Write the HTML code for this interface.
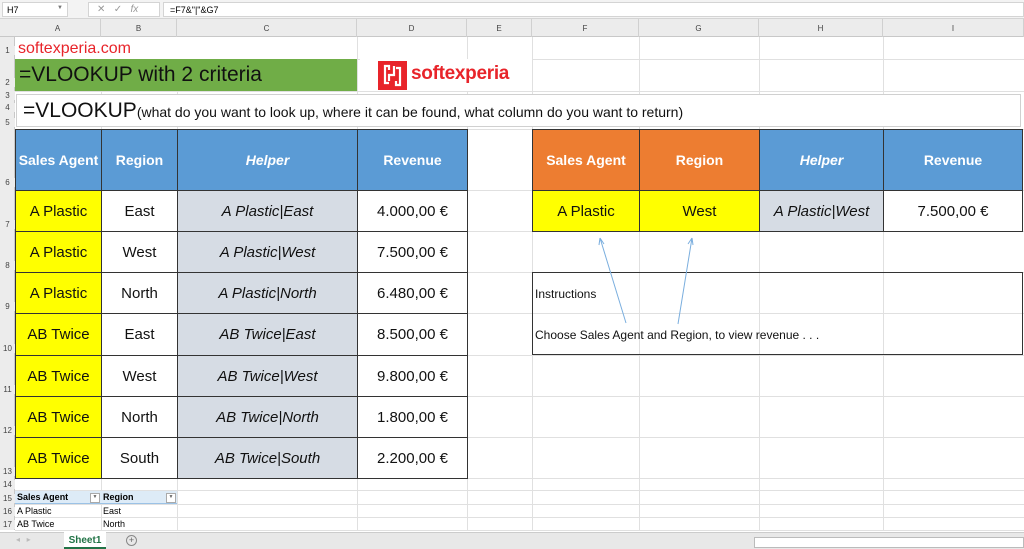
<!DOCTYPE html>
<html><head><meta charset="utf-8"><style>
*{margin:0;padding:0;box-sizing:border-box}
body{width:1024px;height:549px;overflow:hidden;background:#fff;font-family:"Liberation Sans",sans-serif;position:relative}
.a{position:absolute}
.c{position:absolute;display:flex;align-items:center;justify-content:center;font-size:15px;color:#111}
.vl{position:absolute;width:1px;background:#e0e0e0;top:37px;height:493px}
.hl{position:absolute;height:1px;background:#e0e0e0;left:15px;width:1009px}
.rn{position:absolute;left:0;width:15px;font-size:8px;color:#444;text-align:center;background:#ececec}
.ch{position:absolute;top:19px;height:18px;font-size:8px;color:#444;display:flex;align-items:center;justify-content:center;border-right:1px solid #d0d0d0}
.hd{background:#5b9bd5;color:#fff;font-weight:bold}
.y{background:#ffff00}
.g{background:#d6dce4;font-style:italic}
.t{border:1px solid #333}
</style></head><body>
<div class="a" style="left:0;top:0;width:1024px;height:19px;background:#f3f3f3;border-bottom:1px solid #d4d4d4"></div>
<div class="a" style="left:2px;top:2px;width:66px;height:15px;background:#fff;border:1px solid #d4d4d4;font-size:9px;padding:2px 4px">H7<span style="float:right;font-size:6px;color:#777">▼</span></div>
<div class="a" style="left:88px;top:2px;width:72px;height:15px;background:#fff;border:1px solid #d4d4d4;font-size:10px;color:#999;padding:1px 8px">✕ &nbsp; ✓ &nbsp; <i>fx</i></div>
<div class="a" style="left:163px;top:2px;width:861px;height:15px;background:#fff;border:1px solid #d4d4d4;font-size:9px;padding:2px 6px">=F7&amp;"|"&amp;G7</div>
<div class="a" style="left:0;top:19px;width:1024px;height:18px;background:#ececec;border-bottom:1px solid #c8c8c8"></div>
<div class="ch" style="left:15px;width:86px">A</div><div class="ch" style="left:101px;width:76px">B</div><div class="ch" style="left:177px;width:180px">C</div><div class="ch" style="left:357px;width:110px">D</div><div class="ch" style="left:467px;width:65px">E</div><div class="ch" style="left:532px;width:107px">F</div><div class="ch" style="left:639px;width:120px">G</div><div class="ch" style="left:759px;width:124px">H</div><div class="ch" style="left:883px;width:141px">I</div>
<div class="a" style="left:0;top:37px;width:15px;height:493px;background:#ececec;border-right:1px solid #c8c8c8"></div>
<div class="rn" style="top:46px">1</div><div class="rn" style="top:78px">2</div><div class="rn" style="top:91px">3</div><div class="rn" style="top:103px">4</div><div class="rn" style="top:118px">5</div><div class="rn" style="top:178px">6</div><div class="rn" style="top:220px">7</div><div class="rn" style="top:261px">8</div><div class="rn" style="top:302px">9</div><div class="rn" style="top:344px">10</div><div class="rn" style="top:385px">11</div><div class="rn" style="top:426px">12</div><div class="rn" style="top:467px">13</div><div class="rn" style="top:480px">14</div><div class="rn" style="top:494px">15</div><div class="rn" style="top:507px">16</div><div class="rn" style="top:520px">17</div>
<div class="vl" style="left:101px"></div><div class="vl" style="left:177px"></div><div class="vl" style="left:357px"></div><div class="vl" style="left:467px"></div><div class="vl" style="left:532px"></div><div class="vl" style="left:639px"></div><div class="vl" style="left:759px"></div><div class="vl" style="left:883px"></div>
<div class="hl" style="top:59px"></div><div class="hl" style="top:91px"></div><div class="hl" style="top:129px"></div><div class="hl" style="top:190px"></div><div class="hl" style="top:231px"></div><div class="hl" style="top:272px"></div><div class="hl" style="top:313px"></div><div class="hl" style="top:355px"></div><div class="hl" style="top:396px"></div><div class="hl" style="top:437px"></div><div class="hl" style="top:478px"></div><div class="hl" style="top:490px"></div><div class="hl" style="top:504px"></div><div class="hl" style="top:517px"></div><div class="hl" style="top:530px"></div>
<div class="a" style="left:15px;top:37px;width:342px;height:22px;background:#fff"></div>
<div class="a" style="left:18px;top:40px;font-size:16px;color:#e8242a">softexperia.com</div>
<div class="a" style="left:15px;top:59px;width:342px;height:32px;background:#70ad47;font-size:21px;color:#111;padding:4px 4px;white-space:nowrap">=VLOOKUP with 2 criteria</div>
<div class="a" style="left:360px;top:59px;width:172px;height:32px;background:#fff"></div>
<svg class="a" style="left:378px;top:61px" width="29" height="29" viewBox="0 0 29 29"><rect width="29" height="29" fill="#e8242a"/><path d="M16 5v9h-5v6M11 9v-4h-4v17h4M18 20v4h4V7h-4" stroke="#fff" stroke-width="2.2" fill="none"/></svg>
<div class="a" style="left:411px;top:63px;font-size:19px;font-weight:bold;color:#e8242a;letter-spacing:-0.3px">softexperia</div>
<div class="a" style="left:16px;top:94px;width:1005px;height:33px;background:#fff;border:1px solid #d0d0d0;white-space:nowrap;padding:4px 6px;color:#111"><span style="font-size:21px">=VLOOKUP</span><span style="font-size:14px">(what do you want to look up, where it can be found, what column do you want to return)</span></div>
<div class="c hd t" style="left:15px;top:129px;width:87px;height:62px;font-size:14px">Sales Agent</div>
<div class="c hd t" style="left:101px;top:129px;width:77px;height:62px;font-size:14px">Region</div>
<div class="c hd t" style="left:177px;top:129px;width:181px;height:62px;font-size:14px;font-style:italic">Helper</div>
<div class="c hd t" style="left:357px;top:129px;width:111px;height:62px;font-size:14px">Revenue</div>
<div class="c y t" style="left:15px;top:190px;width:87px;height:42px">A Plastic</div><div class="c t" style="left:101px;top:190px;width:77px;height:42px">East</div><div class="c g t" style="left:177px;top:190px;width:181px;height:42px">A Plastic|East</div><div class="c t" style="left:357px;top:190px;width:111px;height:42px">4.000,00 €</div>
<div class="c y t" style="left:15px;top:231px;width:87px;height:42px">A Plastic</div><div class="c t" style="left:101px;top:231px;width:77px;height:42px">West</div><div class="c g t" style="left:177px;top:231px;width:181px;height:42px">A Plastic|West</div><div class="c t" style="left:357px;top:231px;width:111px;height:42px">7.500,00 €</div>
<div class="c y t" style="left:15px;top:272px;width:87px;height:42px">A Plastic</div><div class="c t" style="left:101px;top:272px;width:77px;height:42px">North</div><div class="c g t" style="left:177px;top:272px;width:181px;height:42px">A Plastic|North</div><div class="c t" style="left:357px;top:272px;width:111px;height:42px">6.480,00 €</div>
<div class="c y t" style="left:15px;top:313px;width:87px;height:43px">AB Twice</div><div class="c t" style="left:101px;top:313px;width:77px;height:43px">East</div><div class="c g t" style="left:177px;top:313px;width:181px;height:43px">AB Twice|East</div><div class="c t" style="left:357px;top:313px;width:111px;height:43px">8.500,00 €</div>
<div class="c y t" style="left:15px;top:355px;width:87px;height:42px">AB Twice</div><div class="c t" style="left:101px;top:355px;width:77px;height:42px">West</div><div class="c g t" style="left:177px;top:355px;width:181px;height:42px">AB Twice|West</div><div class="c t" style="left:357px;top:355px;width:111px;height:42px">9.800,00 €</div>
<div class="c y t" style="left:15px;top:396px;width:87px;height:42px">AB Twice</div><div class="c t" style="left:101px;top:396px;width:77px;height:42px">North</div><div class="c g t" style="left:177px;top:396px;width:181px;height:42px">AB Twice|North</div><div class="c t" style="left:357px;top:396px;width:111px;height:42px">1.800,00 €</div>
<div class="c y t" style="left:15px;top:437px;width:87px;height:42px">AB Twice</div><div class="c t" style="left:101px;top:437px;width:77px;height:42px">South</div><div class="c g t" style="left:177px;top:437px;width:181px;height:42px">AB Twice|South</div><div class="c t" style="left:357px;top:437px;width:111px;height:42px">2.200,00 €</div>
<div class="c t" style="left:532px;top:129px;width:108px;height:62px;background:#ed7d31;color:#fff;font-weight:bold;font-size:14px">Sales Agent</div>
<div class="c t" style="left:639px;top:129px;width:121px;height:62px;background:#ed7d31;color:#fff;font-weight:bold;font-size:14px">Region</div>
<div class="c hd t" style="left:759px;top:129px;width:125px;height:62px;font-size:14px;font-style:italic">Helper</div>
<div class="c hd t" style="left:883px;top:129px;width:140px;height:62px;font-size:14px">Revenue</div>
<div class="c y t" style="left:532px;top:190px;width:108px;height:42px">A Plastic</div><div class="c y t" style="left:639px;top:190px;width:121px;height:42px">West</div><div class="c g t" style="left:759px;top:190px;width:125px;height:42px">A Plastic|West</div><div class="c t" style="left:883px;top:190px;width:140px;height:42px">7.500,00 €</div>
<div class="a" style="left:532px;top:272px;width:491px;height:83px;border:1.5px solid #333"></div>
<div class="a" style="left:535px;top:287px;font-size:12px;color:#111">Instructions</div>
<div class="a" style="left:535px;top:328px;font-size:12px;color:#111">Choose Sales Agent and Region, to view revenue . . .</div>
<svg class="a" style="left:580px;top:232px" width="130" height="95"><path d="M46 91L20 6M20 6l-1 7M20 6l4 6M98 92L112 6M112 6l-4 6M112 6l1 7" stroke="#7aaede" stroke-width="1" fill="none"/></svg>
<div class="a" style="left:15px;top:491px;width:162px;height:13px;background:#ddebf7;border-bottom:1px solid #9bc2e6"></div>
<div class="a" style="left:17px;top:492px;font-size:9px;font-weight:bold">Sales Agent</div>
<div class="a" style="left:103px;top:492px;font-size:9px;font-weight:bold">Region</div>
<div class="a" style="left:90px;top:493px;width:10px;height:10px;border:1px solid #aaa;background:#fff;font-size:5px;text-align:center;color:#666">▼</div>
<div class="a" style="left:166px;top:493px;width:10px;height:10px;border:1px solid #aaa;background:#fff;font-size:5px;text-align:center;color:#666">▼</div>
<div class="a" style="left:17px;top:506px;font-size:9px">A Plastic</div><div class="a" style="left:103px;top:506px;font-size:9px">East</div>
<div class="a" style="left:17px;top:519px;font-size:9px">AB Twice</div><div class="a" style="left:103px;top:519px;font-size:9px">North</div>
<div class="a" style="left:0;top:532px;width:1024px;height:17px;background:#e8e8e8;border-top:1px solid #ccc"></div>
<div class="a" style="left:16px;top:535px;font-size:8px;color:#bbb">◂ &nbsp; ▸</div>
<div class="a" style="left:64px;top:532px;width:42px;height:17px;background:#fff;border-bottom:2px solid #217346;font-size:10px;font-weight:bold;color:#217346;text-align:center;padding-top:3px">Sheet1</div>
<div class="a" style="left:126px;top:535px;width:11px;height:11px;border:1px solid #888;border-radius:50%;font-size:9px;line-height:9px;text-align:center;color:#666">+</div>
<div class="a" style="left:754px;top:537px;width:270px;height:11px;background:#fff;border:1px solid #bbb"></div>
</body></html>
